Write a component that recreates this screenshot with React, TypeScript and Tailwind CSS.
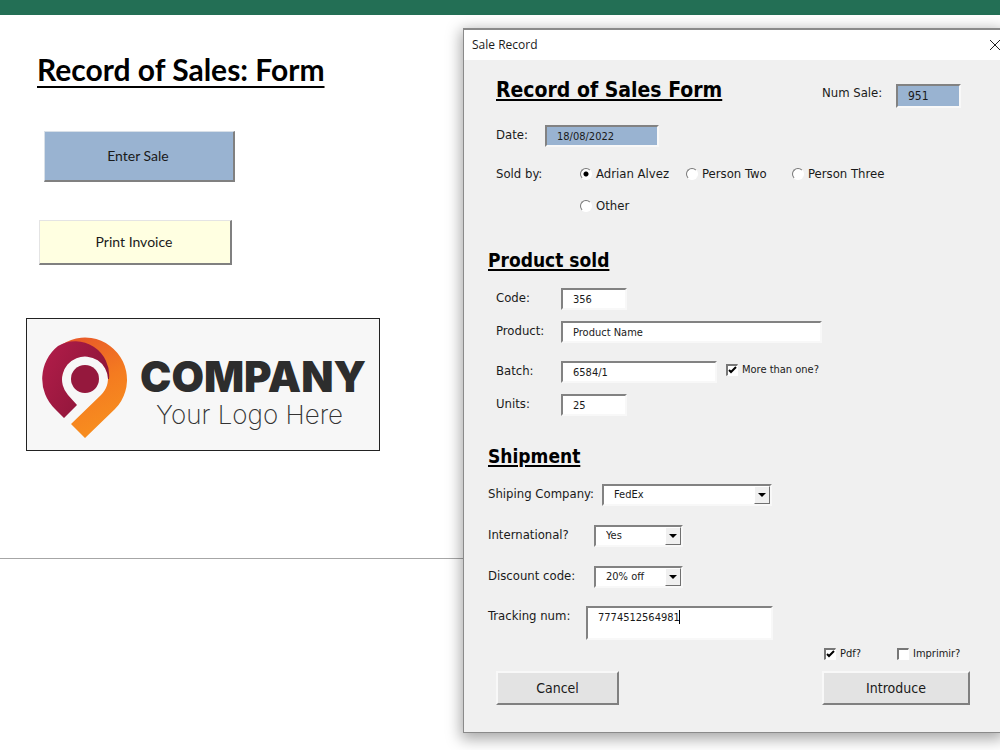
import { useState } from "react";
import type { ReactNode } from "react";

const SELLERS = ["Adrian Alvez", "Person Two", "Person Three", "Other"];

const SUNKEN =
  "border-2 border-t-[#828282] border-l-[#828282] border-r-[#f8f8f8] border-b-[#f8f8f8] rounded-none outline-none";
const RAISED =
  "border-2 border-t-[#f8f8f8] border-l-[#f8f8f8] border-r-[#808080] border-b-[#808080]";

export default function App() {
  return (
    <div className="min-h-screen overflow-hidden bg-white text-[#1a1a1a]">
      <header className="h-[15px] bg-[#236f55]" />
      <div className="flex items-start">
        <Sheet />
        <SaleDialog />
      </div>
    </div>
  );
}

function Sheet() {
  return (
    <main className="w-[463px] shrink-0 font-['Lato',sans-serif]">
      <div className="h-[544px] border-b border-[#a6a6a6] pt-9 pl-[26px]">
        <h1 className="ml-[11px] h-9 text-[30px] leading-9 font-bold text-black underline decoration-2 underline-offset-[5px]">
          Record of Sales: Form
        </h1>
        <button
          type="button"
          className="mt-11 ml-[18px] block h-[51px] w-[191px] border-t border-r-2 border-b-2 border-l border-t-[#d8e0e8] border-r-[#808080] border-b-[#808080] border-l-[#d8e0e8] bg-[#99b3d1] pr-0.5 text-sm"
        >
          Enter Sale
        </button>
        <button
          type="button"
          className="mt-[38px] ml-[13px] block h-[45px] w-[193px] border-t border-r-2 border-b-2 border-l border-t-[#e4e4e4] border-r-[#808080] border-b-[#808080] border-l-[#e4e4e4] bg-[#ffffe1] pr-0.5 text-sm"
        >
          Print Invoice
        </button>
        <CompanyLogo />
      </div>
    </main>
  );
}

function CompanyLogo() {
  return (
    <div className="mt-[53px] flex h-[133px] w-[354px] items-center border border-[#222] bg-[#f7f7f7] pt-1 pl-[14px] font-['Inter',sans-serif]">
      <svg width="88" height="104" viewBox="11 11 88 104" aria-hidden="true">
        <defs>
          <linearGradient id="orange" x1="0" y1="0" x2="0.4" y2="1">
            <stop offset="0" stopColor="#e5502b" />
            <stop offset="0.6" stopColor="#f47b20" />
            <stop offset="1" stopColor="#f78c1f" />
          </linearGradient>
          <linearGradient id="maroon" x1="0" y1="0" x2="1" y2="0.6">
            <stop offset="0" stopColor="#b31d4a" />
            <stop offset="1" stopColor="#8b1538" />
          </linearGradient>
        </defs>
        <path
          d="M41 100 L55 114 L85 85 A42 42 0 1 0 13 55 L32 55 A23 23 0 1 1 71 71 Z"
          fill="url(#orange)"
        />
        <path
          d="M34 94 L25 85 A42 42 0 0 1 28 22 A34 34 0 0 1 79 55 L78 55 A23 23 0 1 0 38 71 L47 81 Z"
          fill="url(#maroon)"
        />
        <circle cx="55" cy="55" r="14" fill="#95183d" />
      </svg>
      <div className="ml-[11px] pt-4">
        <p className="text-[42px] leading-10 font-black text-[#2d2d2d]">
          COMPANY
        </p>
        <p className="ml-4 text-[26px] leading-9 font-extralight text-[#333]">
          Your Logo Here
        </p>
      </div>
    </div>
  );
}

function SaleDialog() {
  const [seller, setSeller] = useState("Adrian Alvez");

  return (
    <section
      aria-label="Sale Record"
      className="mt-[13px] -mr-0.5 min-w-0 flex-1 border border-t-2 border-[#8a8a8a] bg-[#f0f0f0] font-['DejaVu_Sans_Condensed','DejaVu_Sans',sans-serif] text-[13px] shadow-[0_4px_14px_2px_rgba(0,0,0,0.35)]"
    >
      <div className="flex h-[30px] items-center justify-between bg-white pl-2 font-['Open_Sans',sans-serif] text-xs">
        <span>Sale Record</span>
        <button type="button" aria-label="Close">
          <svg width="12" height="12" viewBox="0 0 12 12" stroke="#222">
            <path d="M1 1 L11 11 M11 1 L1 11" />
          </svg>
        </button>
      </div>

      <form className="pt-4 pb-[27px] pl-6">
        <div className="ml-2 flex h-8 items-center">
          <h2 className="w-[326px] pb-1 text-[21px] leading-7 font-bold text-black underline decoration-2 underline-offset-2">
            Record of Sales Form
          </h2>
          <label htmlFor="num" className="w-[74px] pt-0.5">
            Num Sale:
          </label>
          <input
            id="num"
            defaultValue="951"
            className={`h-6 w-[65px] self-end bg-[#99b3d1] pl-[10px] text-xs ${SUNKEN}`}
          />
        </div>

        <Row className="mt-[17px] ml-2">
          <Label id="date" text="Date:" className="w-[49px]" />
          <TextBox
            id="date"
            value="18/08/2022"
            className="w-[114px] bg-[#99b3d1]"
          />
        </Row>

        <fieldset className="mt-4 ml-2 flex">
          <legend className="float-left h-[22px] w-[84px] leading-[22px]">
            Sold by:
          </legend>
          <div className="grid grid-cols-[106px_106px_auto] gap-y-[10px]">
            {SELLERS.map((name) => (
              <label key={name} className="flex h-[22px] items-center gap-1">
                <input
                  type="radio"
                  name="seller"
                  checked={seller === name}
                  onChange={() => setSeller(name)}
                  className="size-3 appearance-none rounded-full border border-t-[#777] border-r-white border-b-white border-l-[#777] bg-white checked:bg-[radial-gradient(circle,#000_2px,#fff_3px)]"
                />
                {name}
              </label>
            ))}
          </div>
        </fieldset>

        <SectionTitle className="mt-[29px]">Product sold</SectionTitle>
        <Row className="mt-[14px] ml-2">
          <Label id="code" text="Code:" className="w-[65px]" />
          <TextBox id="code" value="356" className="w-[66px] bg-white" />
        </Row>
        <Row className="mt-[11px] ml-2">
          <Label id="product" text="Product:" className="w-[65px]" />
          <TextBox
            id="product"
            value="Product Name"
            className="w-[261px] bg-white"
          />
        </Row>
        <Row className="mt-[18px] ml-2">
          <Label id="batch" text="Batch:" className="w-[65px]" />
          <TextBox id="batch" value="6584/1" className="w-[156px] bg-white" />
          <div className="ml-[9px] pb-1">
            <CheckBox label="More than one?" defaultChecked />
          </div>
        </Row>
        <Row className="mt-[11px] ml-2">
          <Label id="units" text="Units:" className="w-[65px]" />
          <TextBox id="units" value="25" className="w-[66px] bg-white" />
        </Row>

        <SectionTitle className="mt-[26px]">Shipment</SectionTitle>
        <Row className="mt-[14px]">
          <Label id="company" text="Shiping Company:" className="w-[114px]" />
          <SelectBox
            id="company"
            options={["FedEx", "UPS", "DHL"]}
            className="w-[170px]"
          />
        </Row>
        <Row className="mt-[19px]">
          <Label id="intl" text="International?" className="w-[106px]" />
          <SelectBox id="intl" options={["Yes", "No"]} className="w-[89px]" />
        </Row>
        <Row className="mt-[19px]">
          <Label id="discount" text="Discount code:" className="w-[106px]" />
          <SelectBox
            id="discount"
            options={["20% off", "10% off"]}
            className="w-[89px]"
          />
        </Row>
        <div className="mt-[18px] flex items-start">
          <Label id="tracking" text="Tracking num:" className="w-[98px]" />
          <div className="relative">
            <textarea
              id="tracking"
              defaultValue="7774512564981"
              className={`peer block h-[34px] w-[187px] resize-none bg-white pt-0.5 pl-[10px] text-[11px] ${SUNKEN}`}
            />
            <span className="pointer-events-none absolute top-1 left-[93px] h-[14px] w-px bg-black peer-focus:hidden" />
          </div>
        </div>

        <div className="mt-[6px] ml-[336px] flex h-4 items-center">
          <div className="w-[73px]">
            <CheckBox label="Pdf?" defaultChecked />
          </div>
          <CheckBox label="Imprimir?" />
        </div>
        <div className="mt-[9px] ml-2 flex gap-[203px] text-sm">
          <button
            type="button"
            className={`h-[34px] w-[123px] bg-[#e3e3e3] ${RAISED}`}
          >
            Cancel
          </button>
          <button
            type="button"
            className={`h-[34px] w-[148px] bg-[#e3e3e3] ${RAISED}`}
          >
            Introduce
          </button>
        </div>
      </form>
    </section>
  );
}

function Row({ className, children }: { className: string; children: ReactNode }) {
  return <div className={`flex h-[22px] items-center ${className}`}>{children}</div>;
}

function SectionTitle({ className, children }: { className: string; children: ReactNode }) {
  return (
    <h3
      className={`h-7 text-[19px] leading-7 font-bold text-black underline decoration-2 underline-offset-2 ${className}`}
    >
      {children}
    </h3>
  );
}

function Label({ id, text, className }: { id: string; text: string; className: string }) {
  return (
    <label htmlFor={id} className={`shrink-0 pb-[3px] whitespace-nowrap ${className}`}>
      {text}
    </label>
  );
}

function TextBox({ id, value, className }: { id: string; value: string; className: string }) {
  return (
    <input
      id={id}
      defaultValue={value}
      className={`h-[22px] pl-[10px] text-[11px] ${SUNKEN} ${className}`}
    />
  );
}

function SelectBox({ id, options, className }: { id: string; options: string[]; className: string }) {
  return (
    <div className={`relative ${className}`}>
      <select
        id={id}
        className={`block h-[22px] w-full appearance-none bg-white pl-[10px] text-[11px] ${SUNKEN}`}
      >
        {options.map((o) => (
          <option key={o}>{o}</option>
        ))}
      </select>
      <span className="pointer-events-none absolute top-0.5 right-0.5 flex h-[18px] w-4 items-center justify-center border border-t-white border-r-[#707070] border-b-[#707070] border-l-white bg-[#f0f0f0]">
        <svg width="8" height="4" viewBox="0 0 8 4">
          <path d="M0 0 H8 L4 4 Z" fill="#000" />
        </svg>
      </span>
    </div>
  );
}

function CheckBox({ label, defaultChecked }: { label: string; defaultChecked?: boolean }) {
  return (
    <label className="flex items-center gap-1 text-[11px] whitespace-nowrap">
      <span className="relative size-3">
        <input
          type="checkbox"
          defaultChecked={defaultChecked}
          className="peer block size-3 appearance-none border-t-2 border-r border-b border-l-2 border-t-[#777] border-r-white border-b-white border-l-[#777] bg-white"
        />
        <svg
          className="pointer-events-none absolute inset-0 hidden peer-checked:block"
          width="12"
          height="12"
          viewBox="0 0 12 12"
        >
          <path d="M3 6 L5 8 L10 3" fill="none" stroke="#000" strokeWidth="2" />
        </svg>
      </span>
      {label}
    </label>
  );
}
